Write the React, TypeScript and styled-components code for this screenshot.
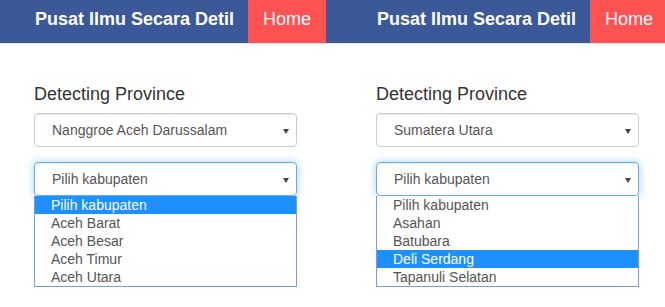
import React from "react";
import styled, { createGlobalStyle } from "styled-components";

const GlobalStyle = createGlobalStyle`
  html, body {
    margin: 0;
    padding: 0;
    background: #fff;
    font-family: "Liberation Sans", Arial, sans-serif;
    overflow: hidden;
  }
`;

const Page = styled.div`
  display: flex;
  width: 665px;
  height: 307px;
  overflow: hidden;
`;

const Panel = styled.div<{ $width: number }>`
  flex: 0 0 ${(p) => p.$width}px;
  width: ${(p) => p.$width}px;
  overflow: hidden;
`;

const NavBar = styled.nav`
  display: flex;
  height: 43px;
  background: #3b5998;
  border-bottom: 1px solid #e4e4e4;
  white-space: nowrap;
`;

// brand block runs from the panel edge to the Home tab
const Brand = styled.div<{ $inset: number }>`
  flex: 0 0 ${(p) => p.$inset + 214}px;
  box-sizing: border-box;
  padding: 9px 0 0 ${(p) => p.$inset + 1}px;
  font-size: 18px;
  line-height: 20px;
  font-weight: bold;
  color: #fff;
`;

const NavLink = styled.div`
  flex: 0 0 78px;
  box-sizing: border-box;
  background: #ff5252;
  padding: 9px 0 0 15px;
  font-size: 18px;
  line-height: 20px;
  color: #fff;
`;

const Content = styled.div<{ $inset: number }>`
  padding: 40px 0 0 ${(p) => p.$inset}px;
  width: 263px;
`;

const Heading = styled.h4`
  margin: 0 0 9px;
  font-size: 18px;
  line-height: 20px;
  font-weight: normal;
  color: #333;
`;

const SelectBox = styled.div<{ $focused?: boolean }>`
  position: relative;
  box-sizing: border-box;
  display: flex;
  align-items: center;
  height: 34px;
  margin-bottom: 15px;
  padding-left: 17px;
  border: 1px solid ${(p) => (p.$focused ? "#66afe9" : "#ccc")};
  border-radius: 4px;
  font-size: 14px;
  color: #555;
  box-shadow: ${(p) =>
    p.$focused
      ? "inset 0 1px 1px rgba(0,0,0,.075), 0 0 8px rgba(102,175,233,.6)"
      : "inset 0 1px 1px rgba(0,0,0,.075)"};
  background: #fff;
`;

const Open = styled.div`
  position: relative;
  z-index: 1;
`;

const Arrow = styled.svg`
  position: absolute;
  right: 7px;
  top: 15px;
`;

const OptionList = styled.ul`
  position: absolute;
  left: 0;
  right: 0;
  top: 34px;
  margin: 0;
  padding: 0;
  list-style: none;
  border: 1px solid #7a9cd8;
  border-top: none;
  background: #fff;
`;

const Option = styled.li<{ $active?: boolean }>`
  height: 18px;
  line-height: 18px;
  padding-left: 16px;
  font-size: 14px;
  color: ${(p) => (p.$active ? "#fff" : "#555")};
  background: ${(p) => (p.$active ? "#1e90ff" : "#fff")};
`;

const Caret = () => (
  <Arrow width="6" height="5" viewBox="0 0 6 5">
    <path d="M0 0 H6 L3 5 Z" fill="#444" />
  </Arrow>
);

type PanelProps = {
  width: number;
  inset: number;
  province: string;
  options: string[];
  active: number;
};

function Screen({ width, inset, province, options, active }: PanelProps) {
  return (
    <Panel $width={width}>
      <NavBar>
        <Brand $inset={inset}>Pusat Ilmu Secara Detil</Brand>
        <NavLink>Home</NavLink>
      </NavBar>
      <Content $inset={inset}>
        <Heading>Detecting Province</Heading>
        <SelectBox>
          {province}
          <Caret />
        </SelectBox>
        <Open>
          <SelectBox $focused>
            Pilih kabupaten
            <Caret />
          </SelectBox>
          <OptionList>
            {options.map((o, i) => (
              <Option key={o} $active={i === active}>
                {o}
              </Option>
            ))}
          </OptionList>
        </Open>
      </Content>
    </Panel>
  );
}

export default function App() {
  return (
    <>
      <GlobalStyle />
      <Page>
        <Screen
          width={326}
          inset={34}
          province="Nanggroe Aceh Darussalam"
          options={[
            "Pilih kabupaten",
            "Aceh Barat",
            "Aceh Besar",
            "Aceh Timur",
            "Aceh Utara",
          ]}
          active={0}
        />
        <Screen
          width={339}
          inset={50}
          province="Sumatera Utara"
          options={[
            "Pilih kabupaten",
            "Asahan",
            "Batubara",
            "Deli Serdang",
            "Tapanuli Selatan",
          ]}
          active={3}
        />
      </Page>
    </>
  );
}
